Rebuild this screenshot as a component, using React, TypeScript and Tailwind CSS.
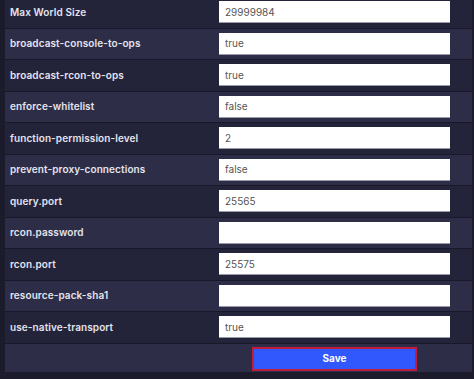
import React, { useState } from "react";

const initialProps: [string, string][] = [
  ["Max World Size", "29999984"],
  ["broadcast-console-to-ops", "true"],
  ["broadcast-rcon-to-ops", "true"],
  ["enforce-whitelist", "false"],
  ["function-permission-level", "2"],
  ["prevent-proxy-connections", "false"],
  ["query.port", "25565"],
  ["rcon.password", ""],
  ["rcon.port", "25575"],
  ["resource-pack-sha1", ""],
  ["use-native-transport", "true"],
];

export default function App() {
  const [values, setValues] = useState(initialProps.map(p => p[1]));

  return (
    <div
      className="w-[474px] h-[379px] overflow-hidden bg-[#1b1b2b] pl-[5px] pr-[2px]"
      style={{ fontFamily: "Inter, 'Open Sans', sans-serif" }}
    >
      {/* Properties table, scrolled a little */}
      <div className="-mt-[3px] flex flex-col">
        {initialProps.map(([name], i) => (
          <div
            key={name}
            className={`flex items-center h-[31.5px] border-b border-[#18182a] ${
              i % 2 === 0 ? "bg-[#23233a]" : "bg-[#2d2d47]"
            }`}
          >
            <span className="w-[214px] pl-[5px] text-[10px] font-semibold tracking-[0.1px] text-[#e4e4ee]">
              {name}
            </span>
            <input
              type="text"
              value={values[i]}
              onChange={(e) => {
                const next = [...values];
                next[i] = e.target.value;
                setValues(next);
              }}
              className="w-[231px] h-[22px] bg-white px-[6px] text-[10px] text-[#555] border-b border-[#9a9aa8] outline-none"
            />
          </div>
        ))}
        <div className="flex items-start h-[28px] pt-[3px] pl-[247px] bg-[#2d2d47]">
          <button className="w-[165px] h-[24px] bg-[#3158fc] border-2 border-[#c01c3c] text-white text-[10px] font-bold">
            Save
          </button>
        </div>
      </div>
    </div>
  );
}
